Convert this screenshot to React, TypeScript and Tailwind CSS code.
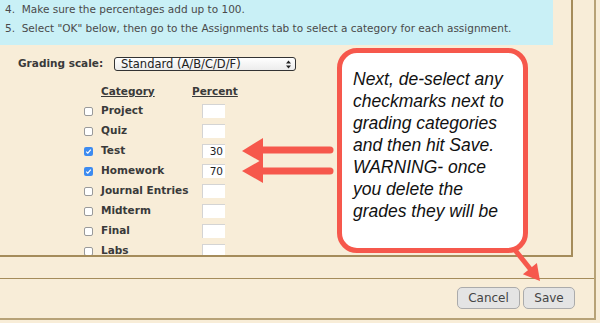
import React from 'react';

const categories = [
  { name: 'Project', checked: false, value: '' },
  { name: 'Quiz', checked: false, value: '' },
  { name: 'Test', checked: true, value: '30' },
  { name: 'Homework', checked: true, value: '70' },
  { name: 'Journal Entries', checked: false, value: '' },
  { name: 'Midterm', checked: false, value: '' },
  { name: 'Final', checked: false, value: '' },
  { name: 'Labs', checked: false, value: '' },
];

function Checkbox({ checked }: { checked: boolean }) {
  if (checked) {
    return (
      <div className="w-[9px] h-[9px] rounded-[2px] bg-[#3d8bf0] flex items-center justify-center">
        <svg width="7" height="7" viewBox="0 0 7 7">
          <path d="M1.2 3.6 L2.8 5.2 L5.8 1.6" fill="none" stroke="#fff" strokeWidth="1.2" />
        </svg>
      </div>
    );
  }
  return <div className="w-[9px] h-[9px] rounded-[2px] bg-white border border-[#9a9a9a]" />;
}

export default function App() {
  return (
    <div className="w-[600px] h-[323px] bg-[#f8edd8] relative overflow-hidden font-['DejaVu_Sans',sans-serif]">
      <div className="w-[596px] h-[320px] border-r-2 border-b-2 border-[#b7a277] flex flex-col">
        {/* inner panel */}
        <div className="w-[573px] h-[257px] shrink-0 overflow-hidden border-r-2 border-b-2 border-[#a58c5b] flex flex-col">
          <div className="w-[553px] h-[45px] shrink-0 bg-[#c9f0f6] pl-[5px] text-[10.5px] leading-[19px] text-[#4a4a4a]">
            <div>4.&nbsp; Make sure the percentages add up to 100.</div>
            <div>5.&nbsp; Select "OK" below, then go to the Assignments tab to select a category for each assignment.</div>
          </div>
          <div className="flex items-center shrink-0 mt-[12px] h-[14px]">
            <span className="ml-[18px] w-[96px] text-[10.5px] font-bold text-[#3a3a3a]">Grading scale:</span>
            <div className="w-[182px] h-[14px] rounded-[3px] border border-[#333] bg-gradient-to-b from-white to-[#ececec] flex items-center justify-between pl-[6px] pr-[4px] text-[11.5px] leading-[12px] text-[#222]">
              <span>Standard (A/B/C/D/F)</span>
              <svg width="5" height="9" viewBox="0 0 5 9">
                <path d="M0 3.5 L2.5 0.5 L5 3.5 Z M0 5.5 L2.5 8.5 L5 5.5 Z" fill="#222" />
              </svg>
            </div>
          </div>
          <div className="flex items-center shrink-0 mt-[11px] h-[19px] text-[10.5px] font-bold text-[#3a3a3a]">
            <span className="ml-[101px] w-[91px] underline">Category</span>
            <span className="underline">Percent</span>
          </div>
          {categories.map((c) => (
            <div key={c.name} className="flex items-center shrink-0 h-[20px] text-[10.5px] font-bold text-[#3a3a3a]">
              <div className="ml-[84px] w-[17px]">
                <Checkbox checked={c.checked} />
              </div>
              <span className="w-[101px]">{c.name}</span>
              <div className="w-[23px] h-[14px] bg-white border-t border-l border-[#d4d4d4] text-right pr-[2px] text-[10.5px] font-normal leading-[13px] text-[#222]">
                {c.value}
              </div>
            </div>
          ))}
        </div>
        <div className="h-[22px] shrink-0 border-b border-[#a58c5b]" />
        <div className="flex-1 flex justify-end items-start pt-[8px] pr-[19px] gap-[3px]">
          <button className="w-[63px] h-[22px] rounded-[5px] border border-[#ababab] bg-[#e4e4e4] text-[12px] text-[#444]">Cancel</button>
          <button className="w-[52px] h-[22px] rounded-[5px] border border-[#ababab] bg-[#e4e4e4] text-[12px] text-[#444]">Save</button>
        </div>
      </div>

      {/* annotation: callout box */}
      <div className="absolute left-[337px] top-[48px] w-[191px] h-[205px] rounded-[20px] border-[5px] border-[#f6584c] bg-white pl-[11px] pt-[15px] font-['Liberation_Sans',Arial,sans-serif] italic text-[17.5px] leading-[22px] text-[#111] whitespace-nowrap">
        Next, de-select any<br />
        checkmarks next to<br />
        grading categories<br />
        and then hit Save.<br />
        WARNING- once<br />
        you delete the<br />
        grades they will be
      </div>

      {/* annotation: arrows */}
      <svg className="absolute left-0 top-0" width="600" height="323" viewBox="0 0 600 323">
        <g fill="#f6584c" stroke="#f6584c">
          <line x1="258" y1="150" x2="330" y2="150" strokeWidth="7" strokeLinecap="round" />
          <path d="M242 151 L263 138 L263 163 Z" stroke="none" />
          <line x1="258" y1="171" x2="330" y2="171" strokeWidth="7" strokeLinecap="round" />
          <path d="M242 171 L263 159 L263 183 Z" stroke="none" />
          <line x1="515" y1="250" x2="531" y2="270" strokeWidth="5" />
          <path d="M540 281 L522.9 274.3 L536.9 262.9 Z" stroke="none" />
        </g>
      </svg>
    </div>
  );
}
